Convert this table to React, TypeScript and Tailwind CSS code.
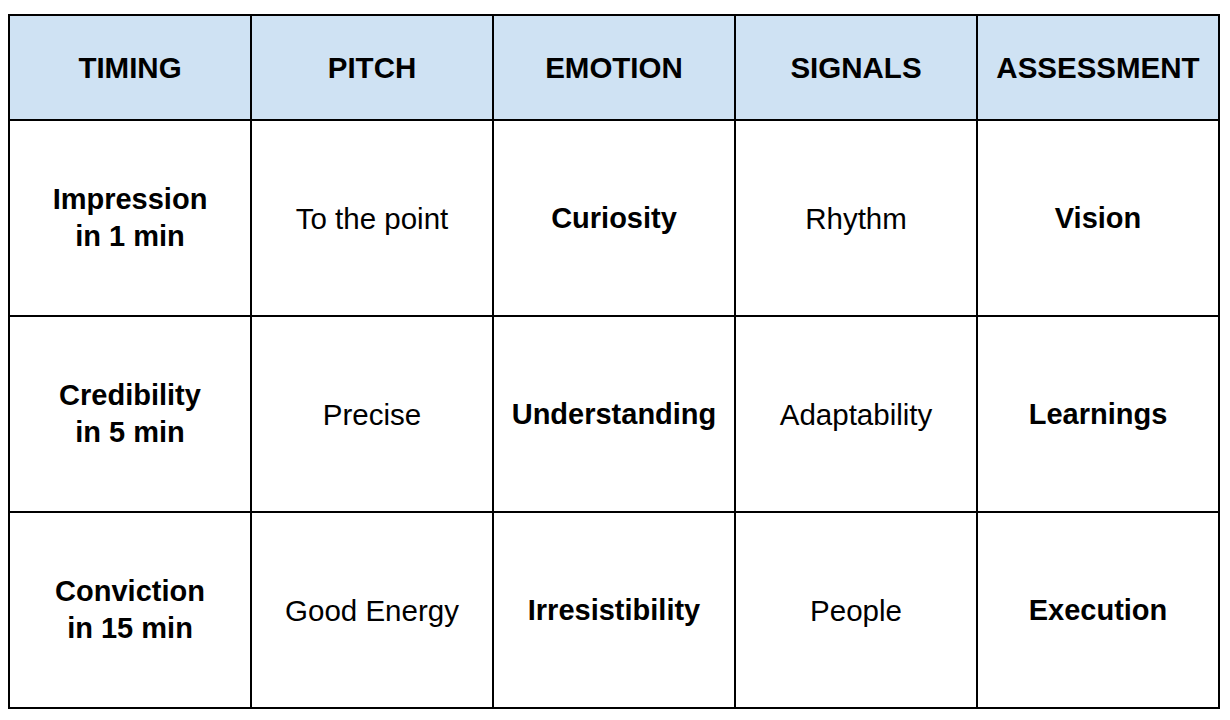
const headers = ["TIMING", "PITCH", "EMOTION", "SIGNALS", "ASSESSMENT"]

const rows = [
  ["Impression\nin 1 min", "To the point", "Curiosity", "Rhythm", "Vision"],
  ["Credibility\nin 5 min", "Precise", "Understanding", "Adaptability", "Learnings"],
  ["Conviction\nin 15 min", "Good Energy", "Irresistibility", "People", "Execution"],
]

// columns 0, 2, 4 are bold
const boldCols = [true, false, true, false, true]

export default function App() {
  return (
    <div className="min-h-[720px] w-[1230px] bg-white pl-[8px] pt-[14px] font-['Liberation_Sans',Arial,sans-serif] text-black">
      <div className="grid w-[1212px] grid-cols-[repeat(5,240px)] grid-rows-[103px_194px_194px_194px] gap-[2px] bg-black p-[2px]">
        {headers.map((h) => (
          <div
            key={h}
            className="flex items-center justify-center bg-[#cfe2f3] text-[29.5px] font-bold leading-[37px]"
          >
            {h}
          </div>
        ))}
        {rows.map((row, r) =>
          row.map((cell, c) => (
            <div
              key={r + "-" + c}
              className={
                "flex items-center justify-center whitespace-pre-line bg-white text-center leading-[37px] " +
                (boldCols[c] ? "text-[29px] font-bold" : "text-[29.5px] font-normal")
              }
            >
              {cell}
            </div>
          ))
        )}
      </div>
    </div>
  )
}
